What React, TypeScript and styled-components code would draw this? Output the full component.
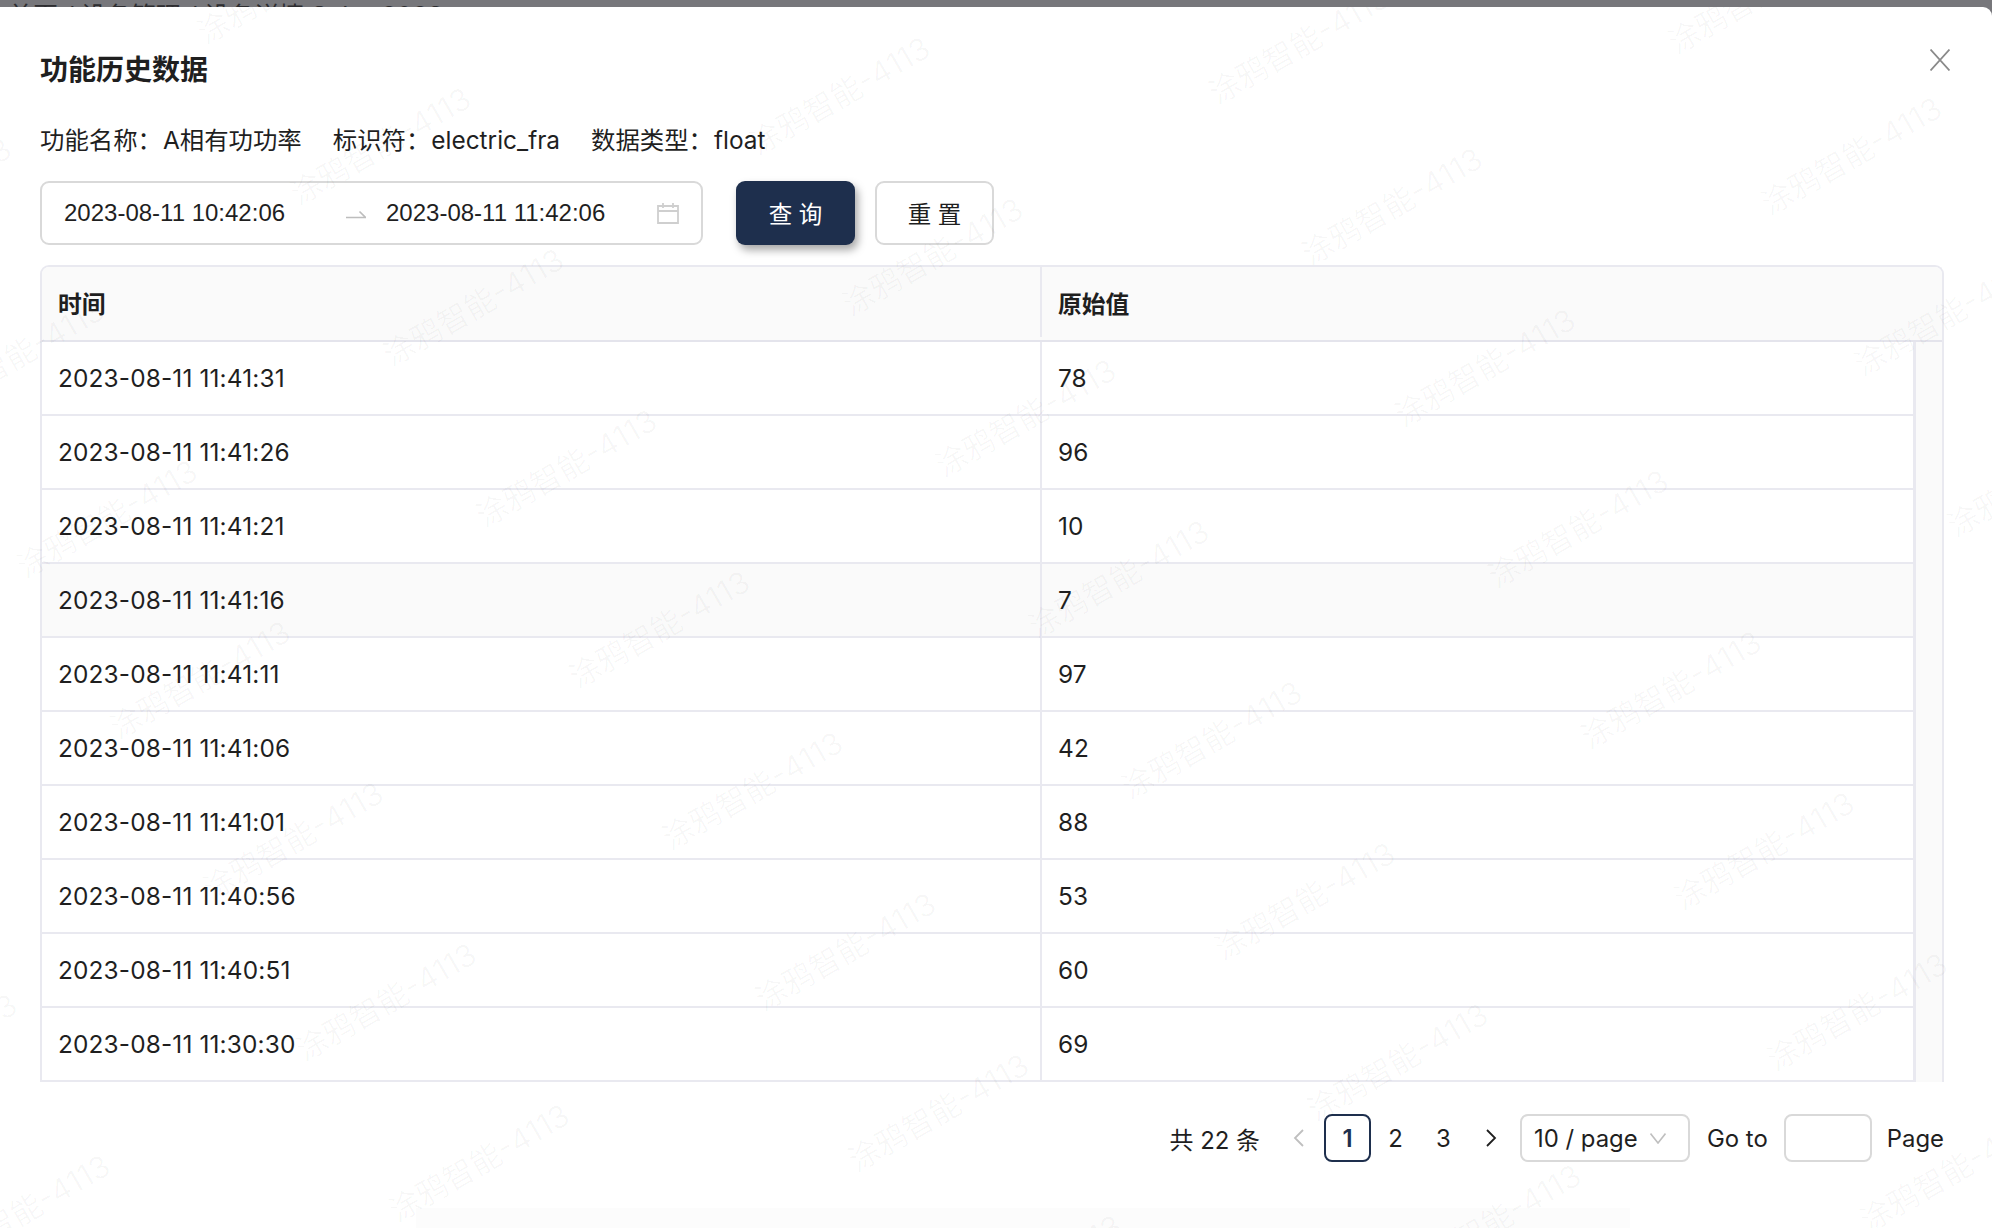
import styled, { createGlobalStyle } from 'styled-components';

const GlobalStyle = createGlobalStyle`
  html, body {
    margin: 0;
    padding: 0;
    height: 100%;
    overflow: hidden;
    background: #77777b;
  }
  * {
    box-sizing: border-box;
  }
  body {
    font-family: Inter, "Noto Sans CJK SC", sans-serif;
    font-size: 24.4px;
    color: #1f1f1f;
  }
`;

const Page = styled.div`
  width: 1992px;
  height: 1228px;
  display: flex;
  flex-direction: column;
  overflow: hidden;
`;

const BehindStrip = styled.div`
  flex: 0 0 7px;
  overflow: hidden;
  padding: 1px 0 0 8px;
  font-size: 25px;
  line-height: 30px;
  color: #2d2d30;
  white-space: nowrap;
`;

const Modal = styled.div`
  flex: 1;
  position: relative;
  overflow: hidden;
  background: #fff;
  border-radius: 0 9px 0 0;
  padding: 45px 48px 0 40px;
`;

const CloseButton = styled.button`
  position: absolute;
  top: 42px;
  right: 42px;
  width: 20px;
  height: 22px;
  padding: 0;
  border: 0;
  background: none;
  color: #8a8a8a;
  svg {
    display: block;
  }
`;

const Title = styled.h2`
  margin: 0;
  font-size: 28px;
  line-height: 36px;
  font-weight: 700;
`;

const InfoRow = styled.div`
  margin-top: 36px;
  display: flex;
  line-height: 32px;
  gap: 31px;
`;

const InfoItem = styled.div`
  display: flex;
`;

const InfoLabel = styled.span`
  margin-right: 1px;
`;

const Toolbar = styled.div`
  margin-top: 25px;
  height: 64px;
  display: flex;
  align-items: flex-start;
`;

const RangePicker = styled.div`
  width: 663px;
  height: 64px;
  display: flex;
  align-items: center;
  padding-left: 22px;
  border: 2px solid #d9d9d9;
  border-radius: 9px;
  font-family: "Liberation Sans", sans-serif;
  font-size: 24px;
`;

const DateText = styled.span<{ $width: number }>`
  width: ${props => props.$width}px;
`;

const RangeArrow = styled.svg`
  width: 20px;
  height: 12px;
  margin: 0 20px 0 0;
  color: #bdbdbd;
`;

const CalendarIcon = styled.svg`
  width: 22px;
  height: 22px;
  color: #cfcfcf;
`;

const QueryButton = styled.button`
  margin-left: 33px;
  width: 119px;
  height: 64px;
  border: 0;
  border-radius: 9px;
  background: #1e2f4d;
  color: #fff;
  font: inherit;
  font-size: 23.5px;
  box-shadow: 3px 5px 8px rgba(0, 0, 0, 0.35);
`;

const ResetButton = styled.button`
  margin-left: 20px;
  width: 119px;
  height: 64px;
  border: 2px solid #d9d9d9;
  border-radius: 9px;
  background: #fff;
  color: #1f1f1f;
  font: inherit;
  font-size: 23.5px;
`;

const TableFrame = styled.div`
  margin-top: 20px;
  width: 1904px;
  border: 2px solid #e9e9f0;
  border-bottom: 0;
  border-radius: 9px 9px 0 0;
`;

const HeadRow = styled.div`
  display: grid;
  grid-template-columns: 998px 1fr;
  height: 75px;
  background: #fafafa;
  border-bottom: 2px solid #e4e4ec;
  border-radius: 7px 7px 0 0;
  font-size: 23.8px;
  font-weight: 600;
  padding-bottom: 3px;
`;

const BodyWrap = styled.div`
  display: flex;
`;

const Rows = styled.div`
  flex: 1;
  letter-spacing: 0.15px;
`;

const Row = styled.div<{ $hover?: boolean }>`
  display: grid;
  grid-template-columns: 998px 1fr;
  height: 74px;
  background: ${props => (props.$hover ? '#fafafa' : '#fff')};
  border-bottom: 2px solid #e9e9f0;
`;

const Cell = styled.div`
  display: flex;
  align-items: center;
  padding-left: 16px;
  & + & {
    border-left: 2px solid #e9e9f0;
  }
`;

const ScrollGutter = styled.div`
  width: 29px;
  background: #fafafa;
  border-left: 3px solid #e9e9f0;
`;

const Pagination = styled.div`
  margin-top: 32px;
  height: 48px;
  display: flex;
  justify-content: flex-end;
  align-items: center;
  font-size: 23.9px;
`;

const Total = styled.span`
  margin-right: 16px;
`;

const PageItem = styled.div<{ $active?: boolean }>`
  width: 47px;
  height: 48px;
  margin-right: 1px;
  display: flex;
  align-items: center;
  justify-content: center;
  border: 2px solid ${props => (props.$active ? '#1e2f4d' : 'transparent')};
  border-radius: 8px;
  color: ${props => (props.$active ? '#1e2f4d' : '#1f1f1f')};
  font-weight: ${props => (props.$active ? 600 : 400)};
`;

const SizeSelect = styled.div`
  margin-left: 4px;
  width: 170px;
  height: 48px;
  display: flex;
  align-items: center;
  justify-content: space-between;
  padding: 0 22px 0 12px;
  border: 2px solid #d9d9d9;
  border-radius: 8px;
`;

const PagerLabel = styled.span<{ $gap: number }>`
  margin-left: ${props => props.$gap}px;
`;

const JumpInput = styled.div`
  margin-left: 16px;
  width: 88px;
  height: 48px;
  border: 2px solid #d9d9d9;
  border-radius: 8px;
`;

const FootBand = styled.div`
  margin: 46px 0 0 376px;
  width: 1214px;
  height: 30px;
  background: #fcfcfc;
`;

const WatermarkLayer = styled.div`
  position: absolute;
  left: 284px;
  top: 174px;
  width: 3384px;
  display: grid;
  grid-template-columns: repeat(8, 423px);
  grid-auto-rows: 186px;
  transform-origin: 0 0;
  transform: rotate(-30deg) translate(-1269px, -558px);
  pointer-events: none;
`;

const WatermarkText = styled.span`
  font-size: 31px;
  line-height: 36px;
  color: rgba(0, 0, 0, 0.03);
  white-space: nowrap;
`;

interface HistoryRow {
  time: string;
  value: string;
}

const rows: HistoryRow[] = [
  { time: '2023-08-11 11:41:31', value: '78' },
  { time: '2023-08-11 11:41:26', value: '96' },
  { time: '2023-08-11 11:41:21', value: '10' },
  { time: '2023-08-11 11:41:16', value: '7' },
  { time: '2023-08-11 11:41:11', value: '97' },
  { time: '2023-08-11 11:41:06', value: '42' },
  { time: '2023-08-11 11:41:01', value: '88' },
  { time: '2023-08-11 11:40:56', value: '53' },
  { time: '2023-08-11 11:40:51', value: '60' },
  { time: '2023-08-11 11:30:30', value: '69' },
];

const marks = Array.from({ length: 8 * 14 }, (_, i) => i);

function App() {
  return (
    <Page>
      <GlobalStyle />
      <BehindStrip>首页 / 设备管理 / 设备详情 Solar-2023</BehindStrip>
      <Modal>
        <CloseButton aria-label="close">
          <svg width="20" height="22" viewBox="0 0 20 22" fill="none" stroke="currentColor" strokeWidth="1.8">
            <path d="M0.5 0.5L19.5 21.5M19.5 0.5L0.5 21.5" />
          </svg>
        </CloseButton>
        <Title>功能历史数据</Title>
        <InfoRow>
          <InfoItem>
            <InfoLabel>功能名称：</InfoLabel>A相有功功率
          </InfoItem>
          <InfoItem>
            <InfoLabel>标识符：</InfoLabel>electric_fra
          </InfoItem>
          <InfoItem>
            <InfoLabel>数据类型：</InfoLabel>float
          </InfoItem>
        </InfoRow>
        <Toolbar>
          <RangePicker>
            <DateText $width={282}>2023-08-11 10:42:06</DateText>
            <RangeArrow viewBox="0 0 20 12" fill="none" stroke="currentColor" strokeWidth="1.6">
              <path d="M0 10.5H19.5L13.5 4.5" />
            </RangeArrow>
            <DateText $width={271}>2023-08-11 11:42:06</DateText>
            <CalendarIcon viewBox="0 0 22 22" fill="none" stroke="currentColor" strokeWidth="1.8">
              <path d="M1 4H21V21H1ZM1 9H21M6 1V6M16 1V6" />
            </CalendarIcon>
          </RangePicker>
          <QueryButton>查 询</QueryButton>
          <ResetButton>重 置</ResetButton>
        </Toolbar>
        <TableFrame>
          <HeadRow>
            <Cell>时间</Cell>
            <Cell>原始值</Cell>
          </HeadRow>
          <BodyWrap>
            <Rows>
              {rows.map((row, i) => (
                <Row key={row.time} $hover={i === 3}>
                  <Cell>{row.time}</Cell>
                  <Cell>{row.value}</Cell>
                </Row>
              ))}
            </Rows>
            <ScrollGutter />
          </BodyWrap>
        </TableFrame>
        <Pagination>
          <Total>共 22 条</Total>
          <PageItem>
            <svg width="12" height="18" viewBox="0 0 12 18" fill="none" stroke="#bfbfbf" strokeWidth="1.8">
              <path d="M10 1L2 9L10 17" />
            </svg>
          </PageItem>
          <PageItem $active>1</PageItem>
          <PageItem>2</PageItem>
          <PageItem>3</PageItem>
          <PageItem>
            <svg width="12" height="18" viewBox="0 0 12 18" fill="none" stroke="#1f1f1f" strokeWidth="1.8">
              <path d="M2 1L10 9L2 17" />
            </svg>
          </PageItem>
          <SizeSelect>
            10 / page
            <svg width="16" height="11" viewBox="0 0 16 11" fill="none" stroke="#bfbfbf" strokeWidth="1.6">
              <path d="M0.5 0.5L8 10L15.5 0.5" />
            </svg>
          </SizeSelect>
          <PagerLabel $gap={17}>Go to</PagerLabel>
          <JumpInput />
          <PagerLabel $gap={15}>Page</PagerLabel>
        </Pagination>
        <FootBand />
        <WatermarkLayer>
          {marks.map(i => (
            <WatermarkText key={i}>涂鸦智能-4113</WatermarkText>
          ))}
        </WatermarkLayer>
      </Modal>
    </Page>
  );
}

export default App;
